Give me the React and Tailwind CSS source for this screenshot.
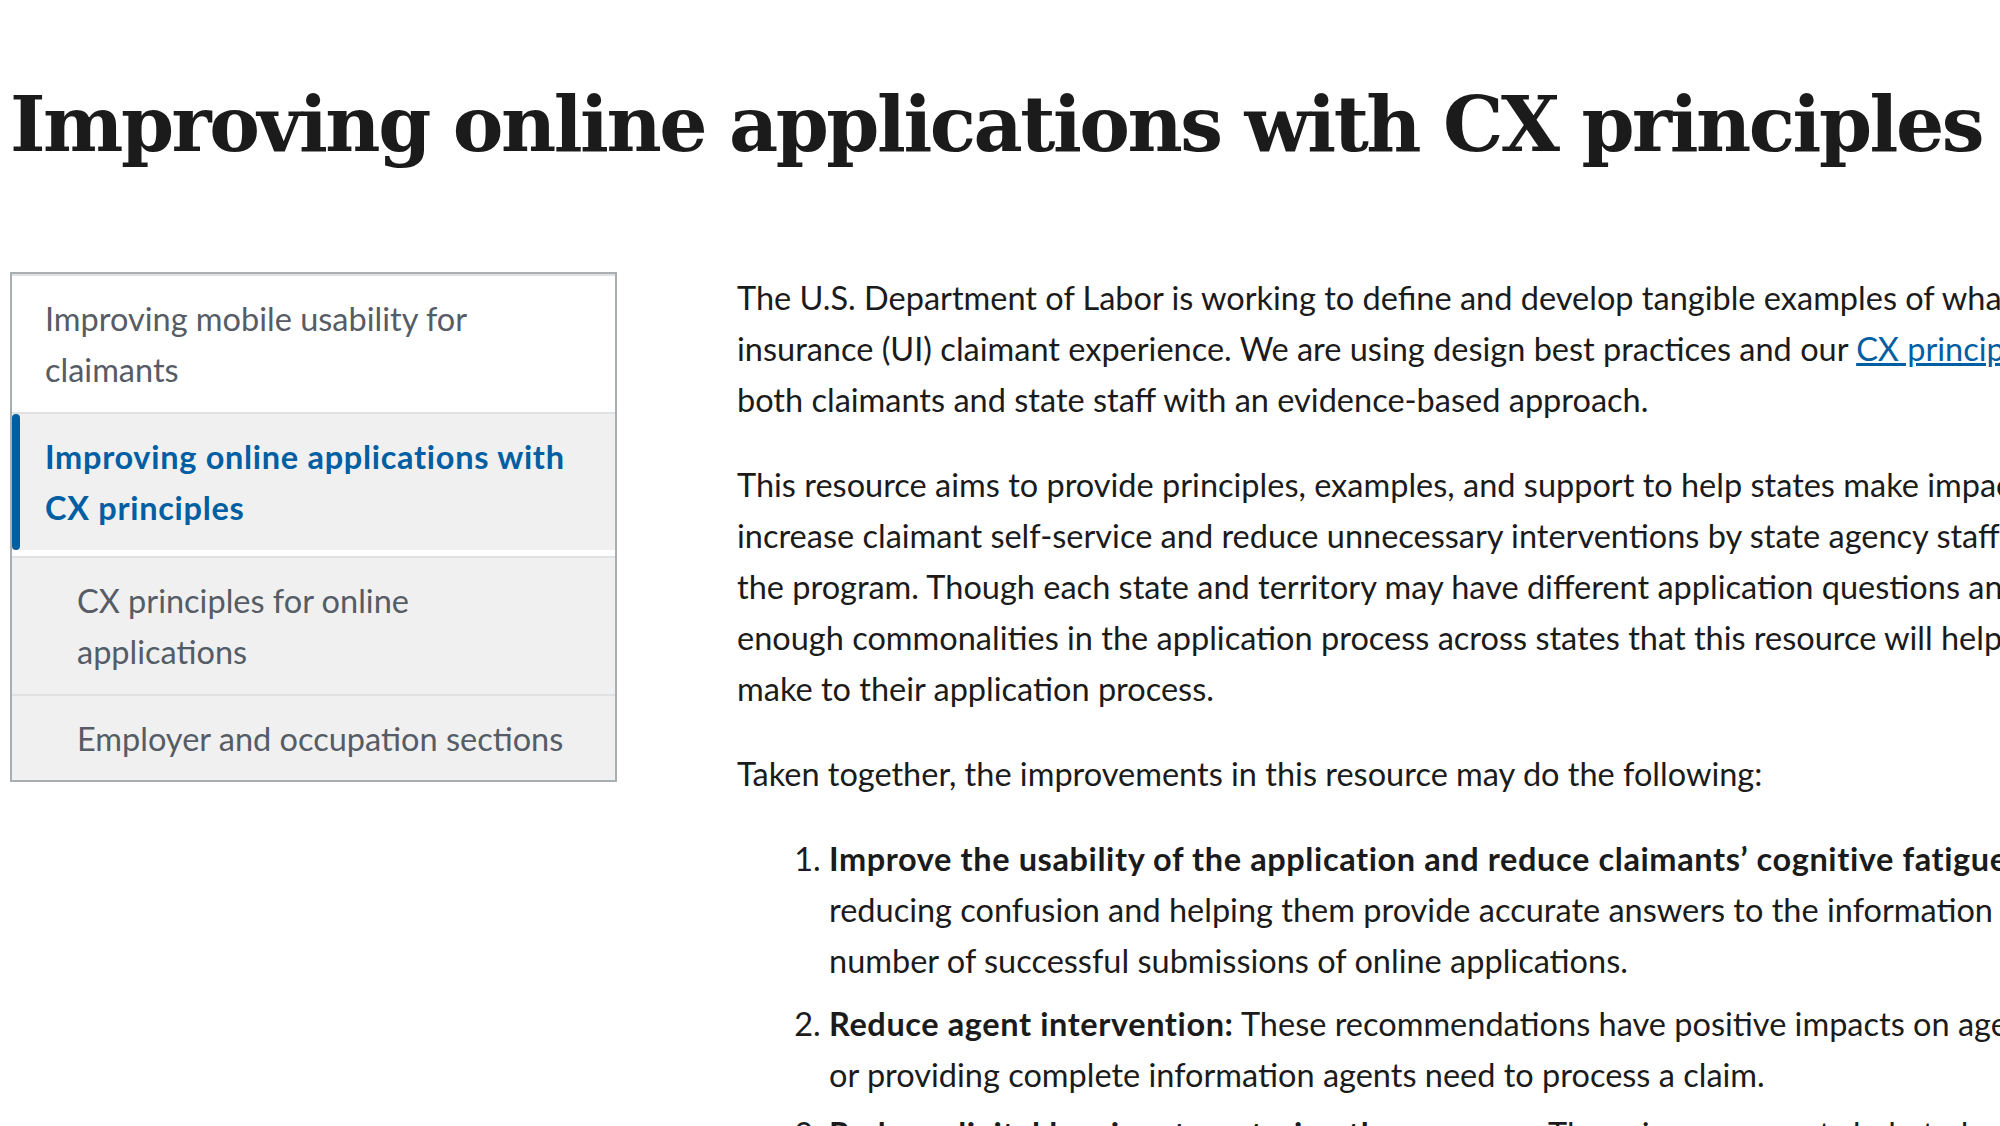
import React from "react";

const sideItem =
  "block border-t-2 border-[#dfe1e2] py-[17px] text-[32.5px] leading-[51px] text-[#565c65]";

const Sidenav = () => {
  return (
    <nav className="w-[607px] shrink-0 self-start border-2 border-[#a9aeb1] bg-white">
      <ul>
        <li className={sideItem + " pl-[33px] pr-[32px]"}>
          Improving mobile usability for
          <br />
          claimants
        </li>
        <li>
          <div className="relative border-t-2 border-[#dfe1e2] bg-[#f0f0f0] py-[17px] pl-[33px] pr-[20px] text-[32.5px] leading-[51px] font-bold tracking-[0.7px] text-[#005ea2] whitespace-nowrap">
            <span className="absolute left-0 top-0 bottom-0 w-[8px] rounded-full bg-[#005ea2]" />
            Improving online applications with
            <br />
            CX principles
          </div>
          <ul className="mt-[6px] bg-[#f0f0f0]">
            <li className={sideItem + " pl-[65px] pr-[20px]"}>
              CX principles for online
              <br />
              applications
            </li>
            <li className={sideItem + " pl-[65px] pr-[20px] pb-[16px] whitespace-nowrap"}>
              Employer and occupation sections
            </li>
          </ul>
        </li>
      </ul>
    </nav>
  );
};

export default function App() {
  return (
    <div className="w-[2000px] h-[1126px] overflow-hidden bg-white text-[#1b1b1b] font-['Lato',sans-serif]">
      <h1 className="pl-[10px] pt-[65px] whitespace-nowrap font-['DejaVu_Serif',serif] text-[76px] leading-[120px] font-bold text-[#1b1b1b] tracking-[-2.5px]">
        Improving online applications with CX principles
      </h1>

      <div className="flex gap-[120px] pl-[10px] mt-[87px]">
        <Sidenav />

        <div className="whitespace-nowrap text-[32.5px] leading-[51px]">
          <p>
            The U.S. Department of Labor is working to define and develop tangible examples of what a modernized unemployment
            <br />
            insurance (UI) claimant experience. We are using design best practices and our{" "}
            <a href="#" className="text-[#005ea2] underline">
              CX principles
            </a>{" "}
            to develop resources that serve
            <br />
            both claimants and state staff with an evidence-based approach.
          </p>

          <p className="mt-[34px]">
            This resource aims to provide principles, examples, and support to help states make impactful changes to their
            <br />
            increase claimant self-service and reduce unnecessary interventions by state agency staff while maintaining the
            <br />
            the program. Though each state and territory may have different application questions and requirements, there are
            <br />
            enough commonalities in the application process across states that this resource will help inform the changes states
            <br />
            make to their application process.
          </p>

          <p className="mt-[34px]">
            Taken together, the improvements in this resource may do the following:
          </p>

          <ol className="mt-[34px] list-decimal pl-[92px]">
            <li className="mb-[12px]">
              <strong className="font-bold tracking-[0.6px]">
                Improve the usability of the application and reduce claimants’ cognitive fatigue:
              </strong>{" "}
              These recommendations improve usability by
              <br />
              reducing confusion and helping them provide accurate answers to the information requested, which may increase the
              <br />
              number of successful submissions of online applications.
            </li>
            <li className="mb-[8px]">
              <strong className="font-bold tracking-[0.6px]">Reduce agent intervention:</strong> These recommendations have positive impacts on agency staff by reducing
              <br />
              or providing complete information agents need to process a claim.
            </li>
            <li>
              <strong className="font-bold tracking-[0.6px]">Reduce digital barriers to entering the program:</strong> These improvements help to lower the
              <br />
              barriers that claimants face when they apply.
            </li>
          </ol>
        </div>
      </div>
    </div>
  );
}
